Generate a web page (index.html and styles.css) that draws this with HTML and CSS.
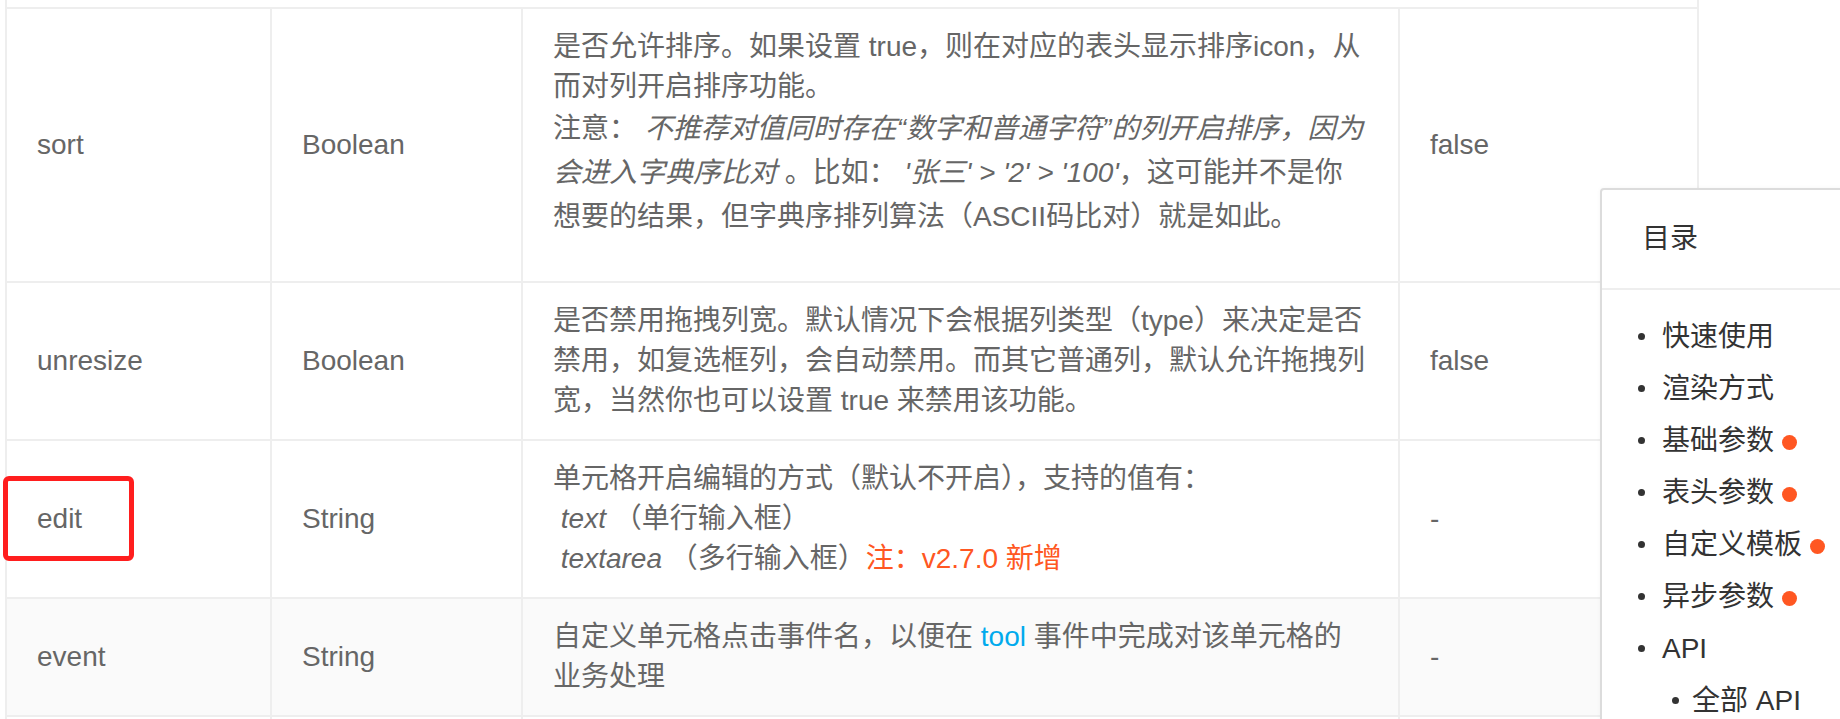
FILE: index.html
```html
<!DOCTYPE html>
<html lang="zh-CN">
<head>
<meta charset="utf-8">
<title>table 表头参数</title>
<link rel="stylesheet" href="styles.css">
</head>
<body>
<div class="page">
  <table class="param-table">
    <tbody>
      <tr class="prev-row"><td colspan="4"><div class="prev-spacer"></div></td></tr>
      <tr class="item">
        <td>sort</td>
        <td>Boolean</td>
        <td>是否允许排序。如果设置 true，则在对应的表头显示排序icon，从<br>而对列开启排序功能。<div class="note">注意： <em>不推荐对值同时存在“数字和普通字符”的列开启排序，因为<br>会进入字典序比对</em> 。比如： <em>'张三' &gt; '2' &gt; '100'</em>，这可能并不是你<br>想要的结果，但字典序排列算法（ASCII码比对）就是如此。</div></td>
        <td>false</td>
      </tr>
      <tr class="item">
        <td>unresize</td>
        <td>Boolean</td>
        <td>是否禁用拖拽列宽。默认情况下会根据列类型（type）来决定是否<br>禁用，如复选框列，会自动禁用。而其它普通列，默认允许拖拽列<br>宽，当然你也可以设置 true 来禁用该功能。</td>
        <td>false</td>
      </tr>
      <tr class="item">
        <td class="marked">edit<span class="mark-box"></span></td>
        <td>String</td>
        <td>单元格开启编辑的方式（默认不开启），支持的值有：<br>&nbsp;<em>text</em> （单行输入框）<br>&nbsp;<em>textarea</em> （多行输入框）<span class="red">注：v2.7.0 新增</span></td>
        <td>-</td>
      </tr>
      <tr class="item hover">
        <td>event</td>
        <td>String</td>
        <td>自定义单元格点击事件名，以便在 <a class="link">tool</a> 事件中完成对该单元格的<br>业务处理</td>
        <td>-</td>
      </tr>
      <tr class="item next-row">
        <td></td>
        <td></td>
        <td></td>
        <td></td>
      </tr>
    </tbody>
  </table>

  <aside class="toc">
    <div class="toc-head">目录</div>
    <ul class="toc-list">
      <li>快速使用</li>
      <li>渲染方式</li>
      <li>基础参数<span class="dot"></span></li>
      <li>表头参数<span class="dot"></span></li>
      <li>自定义模板<span class="dot"></span></li>
      <li>异步参数<span class="dot"></span></li>
      <li>API
        <ul class="toc-sub">
          <li>全部 API</li>
        </ul>
      </li>
    </ul>
  </aside>
</div>
</body>
</html>
```

FILE: styles.css
```css
* {
  box-sizing: border-box;
}

html,
body {
  margin: 0;
  padding: 0;
  overflow: hidden;
  background: #fff;
}

body {
  font-family: "Liberation Sans", "Noto Sans CJK SC", sans-serif;
}

.page {
  position: relative;
  width: 1840px;
  height: 719px;
  overflow: hidden;
}

/* ---------- parameter table ---------- */
.param-table {
  margin-left: 5px;
  width: 1694px;
  border-collapse: separate;
  border-spacing: 0;
  border-left: 2px solid #eee;
  color: #666;
  font-size: 28px;
  line-height: 40px;
}

.param-table td {
  padding: 18px 30px;
  border-right: 2px solid #eee;
  border-bottom: 2px solid #eee;
  vertical-align: middle;
  text-align: left;
}

.param-table .prev-row td {
  padding: 0;
}

.prev-spacer {
  height: 7px;
}

.item td:nth-child(1) { width: 265px; }
.item td:nth-child(2) { width: 251px; }
.item td:nth-child(3) { width: 877px; }
.item td:nth-child(4) { width: 299px; }

.item.hover td {
  background: #fafafa;
}

.item.next-row td {
  height: 118px;
}

.note {
  line-height: 44px;
  padding-bottom: 24px;
}

.param-table em {
  font-style: italic;
}

.red {
  color: #ff5722;
}

.link {
  color: #01aaed;
  text-decoration: none;
}

.marked {
  position: relative;
}

.mark-box {
  position: absolute;
  left: -4px;
  top: 35px;
  width: 131px;
  height: 85px;
  border: 5px solid #ff1e1e;
  border-radius: 6px;
}

/* ---------- floating table of contents ---------- */
.toc {
  position: absolute;
  left: 1600px;
  top: 188px;
  width: 300px;
  height: 620px;
  background: #fff;
  border: 2px solid #dcdcdc;
  border-radius: 4px;
  box-shadow: 0 0 4px rgba(0, 0, 0, 0.04);
  color: #333;
  font-size: 28px;
}

.toc-head {
  height: 100px;
  line-height: 98px;
  padding-left: 40px;
  border-bottom: 2px solid #eee;
}

.toc-list,
.toc-sub {
  list-style: none;
  margin: 0;
}

.toc-list {
  padding: 21px 0 0 60px;
}

.toc-sub {
  padding: 0 0 0 30px;
}

.toc-list li {
  position: relative;
  line-height: 52px;
  white-space: nowrap;
}

.toc-list > li::before {
  content: "";
  position: absolute;
  left: -24px;
  top: 22px;
  width: 7px;
  height: 7px;
  border-radius: 50%;
  background: #333;
}

.toc-sub > li::before {
  content: "";
  position: absolute;
  left: -20px;
  top: 22px;
  width: 7px;
  height: 7px;
  border-radius: 50%;
  background: #333;
}

.dot {
  display: inline-block;
  width: 15px;
  height: 15px;
  margin-left: 8px;
  border-radius: 50%;
  background: #ff5722;
  vertical-align: middle;
}
```
